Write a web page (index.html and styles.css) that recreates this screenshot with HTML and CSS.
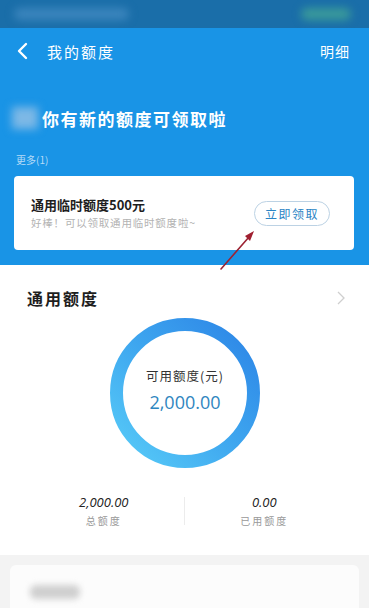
FILE: index.html
```html
<!DOCTYPE html>
<html lang="zh">
<head>
<meta charset="utf-8">
<title>我的额度</title>
<link rel="stylesheet" href="styles.css">
</head>
<body>
<div class="page">
  <div class="status">
    <span class="blob blob-left"></span>
    <span class="blob blob-right"></span>
  </div>
  <section class="hero">
    <div class="nav">
      <svg class="back" width="12" height="18" viewBox="0 0 12 18"><path d="M10 2 L3 9 L10 16" fill="none" stroke="#fff" stroke-width="2.4" stroke-linecap="round" stroke-linejoin="round"/></svg>
      <span class="nav-title">我的额度</span>
      <span class="nav-right">明细</span>
    </div>
    <div class="promo">
      <span class="avatar"></span>
      <span class="promo-text">你有新的额度可领取啦</span>
    </div>
    <div class="more">更多(1)</div>
    <div class="card">
      <div class="card-text">
        <div class="card-title">通用临时额度500元</div>
        <div class="card-sub">好棒！可以领取通用临时额度啦~</div>
      </div>
      <button class="claim">立即领取</button>
    </div>
    <svg class="arrow" width="50" height="50" viewBox="0 0 50 50">
      <line x1="6" y1="46" x2="34" y2="14" stroke="#9c2333" stroke-width="1.6" stroke-linecap="round"/>
      <path d="M39 8 L30 13 L35 18 Z" fill="#a01f30"/>
    </svg>
  </section>
  <section class="main">
    <div class="sec-head">
      <span class="sec-title">通用额度</span>
      <svg width="8" height="14" viewBox="0 0 8 14"><path d="M1 1 L7 7 L1 13" fill="none" stroke="#cfcfcf" stroke-width="1.3"/></svg>
    </div>
    <div class="ring-wrap">
      <svg class="ring" width="150" height="150" viewBox="0 0 150 150">
        <defs>
          <linearGradient id="rg" x1="0" y1="1" x2="1" y2="0">
            <stop offset="0" stop-color="#58ccf8"/>
            <stop offset="0.5" stop-color="#3ea6ef"/>
            <stop offset="1" stop-color="#2c84e6"/>
          </linearGradient>
        </defs>
        <circle cx="75" cy="75" r="68.5" fill="none" stroke="url(#rg)" stroke-width="13"/>
      </svg>
      <div class="ring-text">
        <div class="ring-label">可用额度(元)</div>
        <div class="ring-value">2,000.00</div>
      </div>
    </div>
    <div class="stats">
      <div class="stat">
        <div class="stat-num">2,000.00</div>
        <div class="stat-label">总额度</div>
      </div>
      <div class="divider"></div>
      <div class="stat">
        <div class="stat-num">0.00</div>
        <div class="stat-label">已用额度</div>
      </div>
    </div>
  </section>
  <section class="bottom">
    <div class="bottom-card">
      <span class="blur-text"></span>
    </div>
  </section>
</div>
</body>
</html>
```
FILE: styles.css
```css
* { box-sizing: border-box; }
html, body { margin: 0; padding: 0; }
body {
  font-family: "Noto Sans CJK SC", "Noto Sans", sans-serif;
  background: #f4f4f4;
  width: 369px;
  height: 608px;
  overflow: hidden;
}
.page { display: flex; flex-direction: column; height: 608px; }
.status {
  height: 28px;
  background: #1a6ea9;
  display: flex;
  align-items: center;
  justify-content: space-between;
  padding: 0 14px 0 14px;
}
.blob { display: block; height: 12px; border-radius: 6px; filter: blur(4px); }
.blob-left { width: 115px; background: #3b85bd; }
.blob-right { width: 50px; background: #3a9a9a; margin-right: 4px; }
.hero {
  position: relative;
  background: #1994e6;
  padding: 0 15px 15px 14px;
  display: flex;
  flex-direction: column;
}
.nav {
  height: 46px;
  display: flex;
  align-items: center;
  color: #fff;
  margin-right: 4px;
}
.back { margin-left: 2px; }
.nav-title { margin-left: 19px; font-size: 15px; letter-spacing: 2px; }
.nav-right { margin-left: auto; font-size: 14px; letter-spacing: 1px; }
.promo {
  margin-top: 32px;
  height: 24px;
  display: flex;
  align-items: center;
}
.avatar {
  width: 26px; height: 22px;
  background: #7db8e6;
  filter: blur(4px);
  margin-left: -2px;
}
.promo-text {
  margin-left: 4px;
  color: #fff;
  font-size: 17px;
  font-weight: 700;
  letter-spacing: 1.5px;
}
.more {
  margin-top: 23px;
  margin-left: 2px;
  font-size: 10px;
  line-height: 14px;
  color: #b5dbf7;
}
.card {
  margin-top: 9px;
  height: 74px;
  background: #fff;
  border-radius: 4px;
  display: flex;
  align-items: center;
  padding: 0 24px 0 17px;
}
.card-text { display: flex; flex-direction: column; gap: 3px; }
.card-title { font-size: 13px; line-height: 16px; color: #1e1e1e; font-weight: 700; letter-spacing: 0; }
.card-sub { font-size: 10.5px; line-height: 14px; color: #b3b3b3; letter-spacing: 0.8px; }
.claim {
  margin-left: auto;
  width: 76px;
  height: 25px;
  border: 1px solid #bcd2e4;
  border-radius: 13px;
  background: #fff;
  color: #2a84c4;
  font-family: inherit;
  font-size: 12px;
  letter-spacing: 1.5px;
  padding: 0;
}
.arrow { position: absolute; left: 215px; top: 195px; }
.main {
  background: #fff;
  padding: 0 24px 0 27px;
  height: 290px;
  display: flex;
  flex-direction: column;
}
.sec-head {
  height: 22px;
  margin-top: 22px;
  display: flex;
  align-items: center;
  justify-content: space-between;
}
.sec-title { font-size: 16px; font-weight: 700; color: #1e1e1e; letter-spacing: 2px; }
.ring-wrap {
  position: relative;
  width: 150px; height: 150px;
  margin: 9px 0 0 83px;
}
.ring { display: block; }
.ring-text {
  position: absolute;
  inset: 0;
  display: flex;
  flex-direction: column;
  align-items: center;
  justify-content: center;
  padding-bottom: 4px;
}
.ring-label { font-size: 12.5px; color: #333; letter-spacing: 1px; line-height: 18px; }
.ring-value { font-size: 18px; color: #2f86c0; line-height: 26px; margin-top: 4px; font-family: "Open Sans", sans-serif; font-weight: 400; }
.stats {
  margin: 26px 0 0 -3px;
  width: 320px;
  display: flex;
  align-items: center;
}
.stat { flex: 1; display: flex; flex-direction: column; align-items: center; }
.stat-num { font-size: 13px; line-height: 16px; color: #222; font-style: italic; font-family: "Open Sans", sans-serif; font-weight: 400; }
.stat-label { margin-top: 4px; font-size: 10px; line-height: 14px; color: #999; letter-spacing: 2px; }
.divider { width: 1px; height: 28px; background: #ececec; }
.bottom {
  flex: 1;
  background: #f3f3f3;
  padding: 10px 10px 0 10px;
}
.bottom-card {
  height: 100%;
  background: #fcfcfc;
  border-radius: 6px 6px 0 0;
  padding: 20px 0 0 20px;
}
.blur-text {
  display: block;
  width: 50px; height: 14px;
  background: #cfcfcf;
  border-radius: 6px;
  filter: blur(3px);
}
```
